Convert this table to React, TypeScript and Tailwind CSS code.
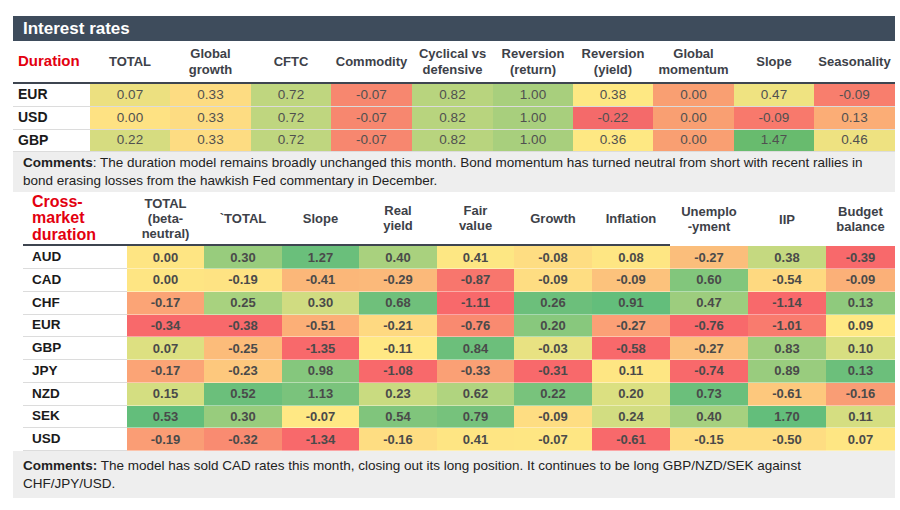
const topCols = [
  'TOTAL',
  'Global\ngrowth',
  'CFTC',
  'Commodity',
  'Cyclical vs\ndefensive',
  'Reversion\n(return)',
  'Reversion\n(yield)',
  'Global\nmomentum',
  'Slope',
  'Seasonality',
];
const topW = ['w-[80px]', 'w-[81px]', 'w-[80px]', 'w-[81px]', 'w-[81px]', 'w-[80px]', 'w-[80px]', 'w-[81px]', 'w-[80px]', 'w-[81px]'];

const topRows: [string, [string, string][]][] = [
  ['EUR', [
    ['0.07', 'bg-[#ece080]'], ['0.33', 'bg-[#fddc82]'], ['0.72', 'bg-[#bfd67f]'], ['-0.07', 'bg-[#f7876f]'], ['0.82', 'bg-[#b8d47e]'],
    ['1.00', 'bg-[#a8cf7d]'], ['0.38', 'bg-[#fee883]'], ['0.00', 'bg-[#f99f72]'], ['0.47', 'bg-[#efe381]'], ['-0.09', 'bg-[#f87e6d]'],
  ]],
  ['USD', [
    ['0.00', 'bg-[#fee283]'], ['0.33', 'bg-[#fddc82]'], ['0.72', 'bg-[#bfd67f]'], ['-0.07', 'bg-[#f7876f]'], ['0.82', 'bg-[#b8d47e]'],
    ['1.00', 'bg-[#a8cf7d]'], ['-0.22', 'bg-[#f46a6a]'], ['0.00', 'bg-[#f99f72]'], ['-0.09', 'bg-[#f8796c]'], ['0.13', 'bg-[#fbad76]'],
  ]],
  ['GBP', [
    ['0.22', 'bg-[#d6dc80]'], ['0.33', 'bg-[#fddc82]'], ['0.72', 'bg-[#bfd67f]'], ['-0.07', 'bg-[#f7876f]'], ['0.82', 'bg-[#b8d47e]'],
    ['1.00', 'bg-[#a8cf7d]'], ['0.36', 'bg-[#fee883]'], ['0.00', 'bg-[#f99f72]'], ['1.47', 'bg-[#68bb6e]'], ['0.46', 'bg-[#eee281]'],
  ]],
];

const botCols = [
  'TOTAL\n(beta-\nneutral)',
  '`TOTAL',
  'Slope',
  'Real\nyield',
  'Fair\nvalue',
  'Growth',
  'Inflation',
  'Unemplo\n-yment',
  'IIP',
  'Budget\nbalance',
];
const botW = ['w-[77px]', 'w-[78px]', 'w-[77px]', 'w-[78px]', 'w-[77px]', 'w-[78px]', 'w-[78px]', 'w-[78px]', 'w-[78px]', 'w-[69px]'];

const botRows: [string, [string, string][]][] = [
  ['AUD', [
    ['0.00', 'bg-[#fee583]'], ['0.30', 'bg-[#98cc7d]'], ['1.27', 'bg-[#6abf7b]'], ['0.40', 'bg-[#a9d17e]'], ['0.41', 'bg-[#fde783]'],
    ['-0.08', 'bg-[#fedd82]'], ['0.08', 'bg-[#fee683]'], ['-0.27', 'bg-[#fbbe7b]'], ['0.38', 'bg-[#c5d980]'], ['-0.39', 'bg-[#f8696b]'],
  ]],
  ['CAD', [
    ['0.00', 'bg-[#fee583]'], ['-0.19', 'bg-[#fee383]'], ['-0.41', 'bg-[#fbb779]'], ['-0.29', 'bg-[#fbb97a]'], ['-0.87', 'bg-[#f8766d]'],
    ['-0.09', 'bg-[#fedd82]'], ['-0.09', 'bg-[#fcc27c]'], ['0.60', 'bg-[#82c67c]'], ['-0.54', 'bg-[#fed980]'], ['-0.09', 'bg-[#fbb078]'],
  ]],
  ['CHF', [
    ['-0.17', 'bg-[#fba476]'], ['0.25', 'bg-[#a8d27f]'], ['0.30', 'bg-[#d0dc81]'], ['0.68', 'bg-[#6fc07b]'], ['-1.11', 'bg-[#f8696b]'],
    ['0.26', 'bg-[#6cbf7b]'], ['0.91', 'bg-[#63be7b]'], ['0.47', 'bg-[#9dcd7e]'], ['-1.14', 'bg-[#f8696b]'], ['0.13', 'bg-[#8fca7d]'],
  ]],
  ['EUR', [
    ['-0.34', 'bg-[#f8696b]'], ['-0.38', 'bg-[#f8696b]'], ['-0.51', 'bg-[#fcaf77]'], ['-0.21', 'bg-[#fed981]'], ['-0.76', 'bg-[#f98a70]'],
    ['0.20', 'bg-[#88c87d]'], ['-0.27', 'bg-[#fba076]'], ['-0.76', 'bg-[#f8696b]'], ['-1.01', 'bg-[#f97b6e]'], ['0.09', 'bg-[#ffe984]'],
  ]],
  ['GBP', [
    ['0.07', 'bg-[#dde081]'], ['-0.25', 'bg-[#fcbc7a]'], ['-1.35', 'bg-[#f8696b]'], ['-0.11', 'bg-[#ffe884]'], ['0.84', 'bg-[#6cbf7b]'],
    ['-0.03', 'bg-[#e8e282]'], ['-0.58', 'bg-[#f8696b]'], ['-0.27', 'bg-[#fbc17c]'], ['0.83', 'bg-[#9fce7e]'], ['0.10', 'bg-[#d7df81]'],
  ]],
  ['JPY', [
    ['-0.17', 'bg-[#fba476]'], ['-0.23', 'bg-[#fdc87d]'], ['0.98', 'bg-[#85c77d]'], ['-1.08', 'bg-[#f8696b]'], ['-0.33', 'bg-[#faa075]'],
    ['-0.31', 'bg-[#f8696b]'], ['0.11', 'bg-[#fee683]'], ['-0.74', 'bg-[#f8696b]'], ['0.89', 'bg-[#99cc7e]'], ['0.13', 'bg-[#6cbf7b]'],
  ]],
  ['NZD', [
    ['0.15', 'bg-[#d4de81]'], ['0.52', 'bg-[#6bbf7b]'], ['1.13', 'bg-[#7ac37c]'], ['0.23', 'bg-[#c9db80]'], ['0.62', 'bg-[#b0d47f]'],
    ['0.22', 'bg-[#78c37c]'], ['0.20', 'bg-[#dbe081]'], ['0.73', 'bg-[#6bbf7b]'], ['-0.61', 'bg-[#fdc87d]'], ['-0.16', 'bg-[#f99d75]'],
  ]],
  ['SEK', [
    ['0.53', 'bg-[#63be7b]'], ['0.30', 'bg-[#98cc7d]'], ['-0.07', 'bg-[#ffe884]'], ['0.54', 'bg-[#80c57c]'], ['0.79', 'bg-[#76c27c]'],
    ['-0.09', 'bg-[#fedd82]'], ['0.24', 'bg-[#d2dd81]'], ['0.40', 'bg-[#a6d17f]'], ['1.70', 'bg-[#63be7b]'], ['0.11', 'bg-[#d5de81]'],
  ]],
  ['USD', [
    ['-0.19', 'bg-[#fa9d75]'], ['-0.32', 'bg-[#f98b71]'], ['-1.34', 'bg-[#f8696b]'], ['-0.16', 'bg-[#fedd82]'], ['0.41', 'bg-[#fee583]'],
    ['-0.07', 'bg-[#fee683]'], ['-0.61', 'bg-[#f8696b]'], ['-0.15', 'bg-[#fedd82]'], ['-0.50', 'bg-[#fedd82]'], ['0.07', 'bg-[#fee683]'],
  ]],
];

export default function App() {
  return (
    <div className="w-[900px] h-[510px] bg-white pl-[13px] pt-[16px] font-['Liberation_Sans',Arial,sans-serif]">
      <div className="w-[882px]">
        {/* Title bar */}
        <div className="h-[25px] bg-[#3e4c5c] pl-[10px] text-[17px] font-bold leading-[25px] text-white">
          Interest rates
        </div>

        {/* Duration table */}
        <div className="flex h-[43px] border-b-2 border-[#3e4550]">
          <div className="w-[77px] pl-[5px] flex items-center text-[15px] font-bold text-[#e3000f]">Duration</div>
          {topCols.map((c, i) => (
            <div
              key={c}
              className={`${topW[i]} flex items-center justify-center text-center whitespace-pre-line text-[13px] leading-[16px] font-bold text-[#3d4148]`}
            >
              {c}
            </div>
          ))}
        </div>
        {topRows.map(([label, cells]) => (
          <div key={label} className="flex h-[22.8px] border-b border-[#dcdcdc]">
            <div className="w-[77px] pl-[5px] flex items-center text-[14px] font-bold text-[#1a1a1a]">{label}</div>
            {cells.map(([v, bg], i) => (
              <div key={i} className={`${topW[i]} ${bg} flex items-center justify-center text-[13.5px] text-[#505050]`}>
                {v}
              </div>
            ))}
          </div>
        ))}

        <div className="h-[40px] bg-[#eeeeee] pl-[10px] pr-[8px] pt-[2px] text-[13.5px] leading-[18px] text-[#222]">
          <span className="font-bold">Comments</span>: The duration model remains broadly unchanged this month. Bond momentum has turned neutral from short with recent rallies in bond erasing losses from the hawkish Fed commentary in December.
        </div>

        {/* Cross-market duration table */}
        <div className="ml-[10px]">
          <div className="flex h-[54px]">
            <div className="w-[104px] pl-[9px] flex items-center border-b-2 border-[#3e4550] text-[16px] leading-[16.5px] font-bold text-[#e3000f]">
              Cross-
              <br />
              market
              <br />
              duration
            </div>
            {botCols.map((c, i) => (
              <div
                key={c}
                className={`${botW[i]} ${i < 7 ? 'border-b-2 border-[#3e4550]' : ''} flex items-center justify-center text-center whitespace-pre-line text-[13px] leading-[15px] font-bold text-[#3d4148]`}
              >
                {c}
              </div>
            ))}
          </div>
          {botRows.map(([label, cells]) => (
            <div key={label} className="flex h-[22.75px]">
              <div className="w-[104px] pl-[9px] flex items-center border-b border-[#dcdcdc] text-[13.5px] font-bold text-[#1a1a1a]">
                {label}
              </div>
              {cells.map(([v, bg], i) => (
                <div
                  key={i}
                  className={`${botW[i]} ${bg} flex justify-center border-b border-white/40 text-[13px] font-bold text-[#4a4a4a] ${i >= 8 ? 'items-end pb-[1px]' : 'items-center'}`}
                >
                  {v}
                </div>
              ))}
            </div>
          ))}
        </div>

        <div className="h-[47px] bg-[#eeeeee] pl-[10px] pr-[8px] pt-[6px] text-[13.5px] leading-[18px] text-[#222]">
          <span className="font-bold">Comments:</span> The model has sold CAD rates this month, closing out its long position. It continues to be long GBP/NZD/SEK against CHF/JPY/USD.
        </div>
      </div>
    </div>
  );
}
